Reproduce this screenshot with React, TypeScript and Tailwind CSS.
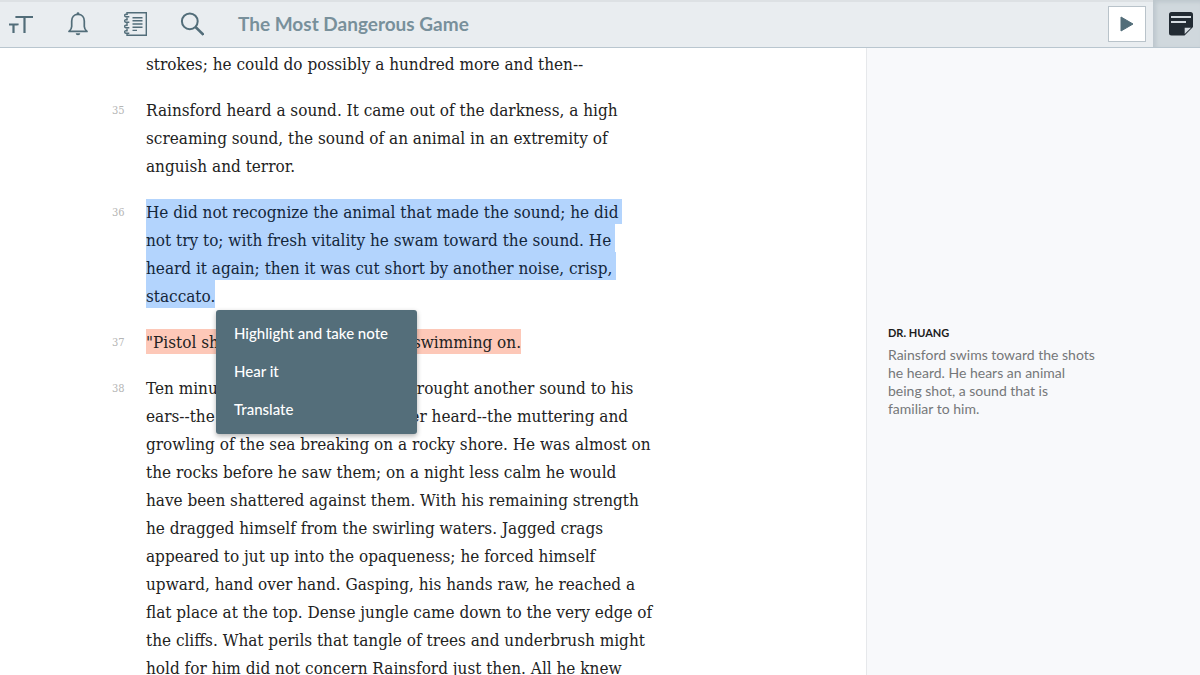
import React from "react";

type Paragraph = { number?: number; lines: string[]; mark?: "selected" | "noted" };

const paragraphs: Paragraph[] = [
  { lines: ["strokes; he could do possibly a hundred more and then--"] },
  {
    number: 35,
    lines: [
      "Rainsford heard a sound. It came out of the darkness, a high",
      "screaming sound, the sound of an animal in an extremity of",
      "anguish and terror.",
    ],
  },
  {
    number: 36,
    mark: "selected",
    lines: [
      "He did not recognize the animal that made the sound; he did",
      "not try to; with fresh vitality he swam toward the sound. He",
      "heard it again; then it was cut short by another noise, crisp,",
      "staccato.",
    ],
  },
  { number: 37, mark: "noted", lines: ['"Pistol shot," muttered Rainsford, swimming on.'] },
  {
    number: 38,
    lines: [
      "Ten minutes of determined effort brought another sound to his",
      "ears--the most welcome he had ever heard--the muttering and",
      "growling of the sea breaking on a rocky shore. He was almost on",
      "the rocks before he saw them; on a night less calm he would",
      "have been shattered against them. With his remaining strength",
      "he dragged himself from the swirling waters. Jagged crags",
      "appeared to jut up into the opaqueness; he forced himself",
      "upward, hand over hand. Gasping, his hands raw, he reached a",
      "flat place at the top. Dense jungle came down to the very edge of",
      "the cliffs. What perils that tangle of trees and underbrush might",
      "hold for him did not concern Rainsford just then. All he knew",
    ],
  },
];

function TextSizeIcon() {
  return (
    <svg width="24" height="24" viewBox="0 0 24 24" fill="none" stroke="currentColor" strokeWidth="2">
      <path d="M7.500 6V5H23V6M15.500 5V21" strokeWidth="2.200" />
      <path d="M0 13.300V12.500H8.500V13.300M4.500 12V21" strokeWidth="2.200" />
    </svg>
  );
}

function BellIcon() {
  return (
    <svg width="20" height="24" viewBox="0 0 20 24" fill="none" stroke="currentColor" strokeWidth="1.700" strokeLinejoin="round">
      <path d="M10 2.300C6 2.300 3.700 5.200 3.700 9v5.500c0 2.200-1 3.500-2.700 4.900h18c-1.700-1.400-2.700-2.700-2.700-4.900V9c0-3.800-2.300-6.700-6.300-6.700Z" />
      <circle cx="10" cy="1.700" r="1.400" fill="currentColor" stroke="none" />
      <path d="M7.700 21.300h4.600a2.300 2 0 0 1-4.600 0Z" fill="currentColor" stroke="none" />
    </svg>
  );
}

function NotebookIcon() {
  return (
    <svg width="24" height="24" viewBox="0 0 24 24" fill="none" stroke="currentColor" strokeWidth="1.400">
      <path d="M4 3V.8H23.300V23.200H4V21.500" />
      <path d="M4 5.500V8M4 11V13.500M4 16.500V19" />
      <path d="M6.300 4.700H2.600a1.300 1.300 0 1 1 1.600-1.700M6.300 10.200H2.600a1.300 1.300 0 1 1 1.600-1.700M6.300 15.700H2.600a1.300 1.300 0 1 1 1.600-1.700M6.300 21.200H2.600a1.300 1.300 0 1 1 1.600-1.700" />
      <path d="M9.500 5.700H19.500M9.500 8.800H19.500M9.500 12H19.500M9.500 15.200H19.500M9.500 18.400H14" />
    </svg>
  );
}

function SearchIcon() {
  return (
    <svg width="24" height="24" viewBox="0 0 24 24" fill="none" stroke="currentColor">
      <circle cx="9.800" cy="9.300" r="7.900" strokeWidth="2" />
      <path d="m15.500 15 8 7.700" strokeWidth="2.600" />
    </svg>
  );
}

function NoteIcon() {
  return (
    <svg width="24" height="24" viewBox="0 0 24 24">
      <path d="M2.500 0h19A2.500 2.500 0 0 1 24 2.500V15L15.500 23.500H2.500A2.500 2.500 0 0 1 0 21V2.500A2.500 2.500 0 0 1 2.500 0Z" fill="#222b33" />
      <path d="M2 4.900H22M2 9.900H17" stroke="#d5dce1" strokeWidth="2" />
      <path d="M15.700 22v-6.300H22Z" fill="#d5dce1" />
    </svg>
  );
}

const tools = [
  { label: "Text size", icon: <TextSizeIcon /> },
  { label: "Notifications", icon: <BellIcon /> },
  { label: "Notebook", icon: <NotebookIcon /> },
  { label: "Search", icon: <SearchIcon /> },
];

function Toolbar() {
  return (
    <header className="flex h-12 shrink-0 items-stretch border-b border-[#b9c6cf] bg-[#e9edf0] shadow-[inset_0_2px_0_#dde1e4]">
      <nav className="flex items-center gap-[33px] pl-[9px] text-[#526d79]">
        {tools.map((tool) => (
          <button key={tool.label} type="button" aria-label={tool.label} className="flex h-6 w-6 items-center justify-center">
            {tool.icon}
          </button>
        ))}
      </nav>
      <h1 className="flex flex-1 items-center pl-[34px] pt-px text-[19px] font-bold text-[#78909b]">
        The Most Dangerous Game
      </h1>
      <div className="flex items-center pr-[7px]">
        <button type="button" aria-label="Play" className="flex h-9 w-[38px] items-center justify-center border border-[#b9c3ca] bg-white">
          <svg width="14" height="16" viewBox="0 0 14 16" fill="#526d79">
            <path d="M1 1v14L13 8Z" stroke="#526d79" strokeLinejoin="round" />
          </svg>
        </button>
      </div>
      <button
        type="button"
        aria-label="Notes"
        className="flex w-[47px] items-center justify-end bg-[#d0d8dd] pr-[7px] shadow-[inset_3px_2px_4px_#bcc6cc]"
      >
        <NoteIcon />
      </button>
    </header>
  );
}

function ContextMenu() {
  return (
    <div className="absolute left-[70px] top-28 z-10 flex w-[201px] flex-col rounded-[3px] bg-[#546e7a] pb-1.5 pt-1 font-['Lato',sans-serif] text-[15px] font-medium text-white shadow-[0_2px_5px_rgba(0,0,0,0.3)]">
      {["Highlight and take note", "Hear it", "Translate"].map((item) => (
        <button key={item} type="button" className="h-[38px] px-[18px] text-left">
          {item}
        </button>
      ))}
    </div>
  );
}

function MarkedLines({ lines, mark }: { lines: string[]; mark: "selected" | "noted" }) {
  const color = mark === "selected" ? "bg-[#b3d4fd] text-[#13263a]" : "bg-[#fdc8b8]";
  return (
    <mark className="flex flex-col items-start bg-transparent pb-0.5 pt-px text-inherit">
      {lines.map((line, i) => (
        <span
          key={line}
          className={`${color} ${i === 0 ? "h-[25px] leading-[26px]" : "h-7 leading-8"} ${i < lines.length - 1 ? "pr-1" : ""}`}
        >
          {line}
        </span>
      ))}
    </mark>
  );
}

export default function App() {
  return (
    <div className="flex h-screen flex-col overflow-hidden bg-white font-['Lato',sans-serif]">
      <Toolbar />
      <div className="flex min-h-0 flex-1">
        <main className="min-w-0 flex-1 overflow-hidden">
          <article className="flex flex-col gap-[18px] pl-28 pt-0.5 font-['DejaVu_Serif_Condensed','DejaVu_Serif',serif] text-[17px] text-[#222]">
            {paragraphs.map((p) => (
              <div key={p.number ?? 34} className="flex">
                {/* The 28px row height is set by the text; the number is centred on the first line. */}
                <span className="h-7 w-[34px] shrink-0 text-[11px] leading-[30px] text-[#b5b5b5]">{p.number}</span>
                <div className="relative whitespace-nowrap leading-7">
                  {p.mark ? (
                    <MarkedLines lines={p.lines} mark={p.mark} />
                  ) : (
                    <p>
                      {p.lines.map((line) => (
                        <React.Fragment key={line}>
                          {line}
                          <br />
                        </React.Fragment>
                      ))}
                    </p>
                  )}
                  {p.mark === "selected" && <ContextMenu />}
                </div>
              </div>
            ))}
          </article>
        </main>
        <aside className="w-[334px] shrink-0 border-l border-[#e6e8eb] bg-[#f8f9fb] pl-[21px] pt-[276px]">
          <h2 className="text-[11px] font-bold leading-[18px] text-[#1c1c1c]">DR. HUANG</h2>
          <p className="mt-1 w-52 text-sm leading-[18px] text-[#757779]">
            Rainsford swims toward the shots he heard. He hears an animal being shot, a sound that is familiar to him.
          </p>
        </aside>
      </div>
    </div>
  );
}
